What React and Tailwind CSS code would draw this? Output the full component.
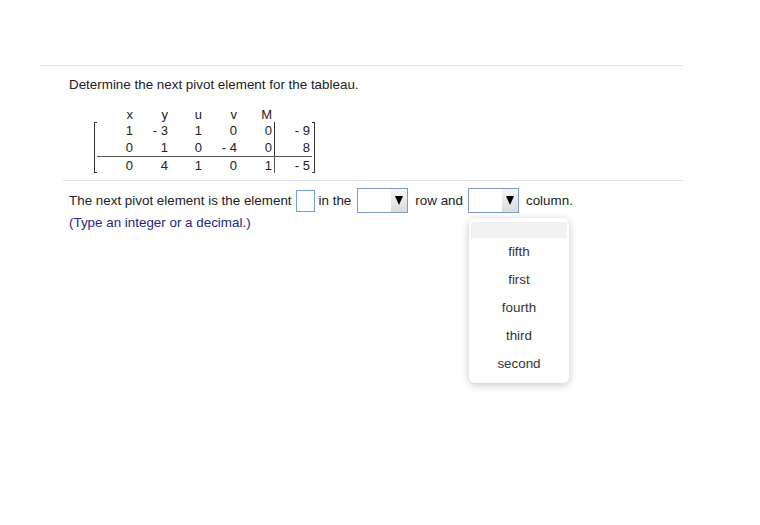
import React from "react";

const cols = ["w-[36px]", "w-[35px]", "w-[34px]", "w-[35px]", "w-[38px]", "w-[37px]"];

function Cell({ i, children, top }) {
  const base = `${cols[i]} h-[17px] leading-[17px] text-right`;
  const extra =
    i === 4 ? " border-r border-[#333] pr-[2px]" : i === 5 ? " pr-[2px]" : "";
  const t = top ? " border-t border-[#555]" : "";
  return <div className={base + extra + t}>{children}</div>;
}

function Select() {
  return (
    <div className="flex w-[51px] h-[25px] border border-[#7f9cc4] bg-white">
      <div className="flex-1" />
      <div className="w-[16px] h-full flex items-center justify-center bg-gradient-to-b from-[#f6f6f6] to-[#dcdcdc]">
        <svg width="8" height="9" viewBox="0 0 8 9">
          <polygon points="0,0 8,0 4,9" fill="#000" />
        </svg>
      </div>
    </div>
  );
}

export default function App() {
  const rows = [
    ["1", "- 3", "1", "0", "0", "- 9"],
    ["0", "1", "0", "- 4", "0", "8"],
    ["0", "4", "1", "0", "1", "- 5"],
  ];
  return (
    <div
      className="w-[760px] h-[525px] bg-white text-[#222] relative"
      style={{ fontFamily: '"Liberation Sans", Arial, sans-serif' }}
    >
      <div className="pt-[65px]">
        <div className="ml-[40px] w-[643px] h-[1px] bg-[#e2e2e2]" />
        <div className="pl-[69px] pt-[9px] text-[13.4px] leading-[20px]">
          Determine the next pivot element for the tableau.
        </div>
        {/* matrix */}
        <div className="pl-[94px] pt-[12px] text-[13px] text-[#222]">
          <div className="flex pl-[3px] h-[15px] leading-[15px]">
            {["x", "y", "u", "v", "M", ""].map((h, i) => (
              <div
                key={i}
                className={`${cols[i]} text-right ${i >= 4 ? "pr-[3px]" : ""}`}
              >
                {h}
              </div>
            ))}
          </div>
          <div className="flex">
            <div className="w-[3px] border-l border-y border-[#333]" />
            <div className="flex flex-col">
              {rows.map((r, ri) => (
                <div key={ri} className="flex">
                  {r.map((v, i) => (
                    <Cell key={i} i={i} top={ri === 2}>
                      {v}
                    </Cell>
                  ))}
                </div>
              ))}
            </div>
            <div className="w-[3px] border-r border-y border-[#333]" />
          </div>
        </div>
        <div className="ml-[63px] mt-[7px] w-[620px] h-[1px] bg-[#e2e2e2]" />
        <div className="pl-[69px] pt-[7px] flex items-center text-[13.4px] leading-[20px]">
          <span>The next pivot element is the element</span>
          <div className="ml-[4px] w-[19px] h-[22px] border border-[#6fa0d8] bg-white" />
          <span className="ml-[4px]">in the</span>
          <div className="ml-[6px]">
            <Select />
          </div>
          <span className="ml-[7px]">row and</span>
          <div className="ml-[5px] relative">
            <Select />
            <div className="absolute left-[1px] top-[30px] w-[100px] bg-white rounded-[6px] shadow-[0_2px_8px_rgba(0,0,0,0.22)] pt-[4px] pb-[5px] px-[2px] text-[#333] text-[13.4px]">
              <div className="h-[16px] bg-[#f2f2f2]" />
              {["fifth", "first", "fourth", "third", "second"].map((o) => (
                <div key={o} className="h-[28px] leading-[28px] text-center">
                  {o}
                </div>
              ))}
            </div>
          </div>
          <span className="ml-[7px]">column.</span>
        </div>
        <div className="pl-[69px] text-[13.4px] leading-[20px] text-[#1f2a7a]">
          (Type an integer or a decimal.)
        </div>
      </div>
    </div>
  );
}
